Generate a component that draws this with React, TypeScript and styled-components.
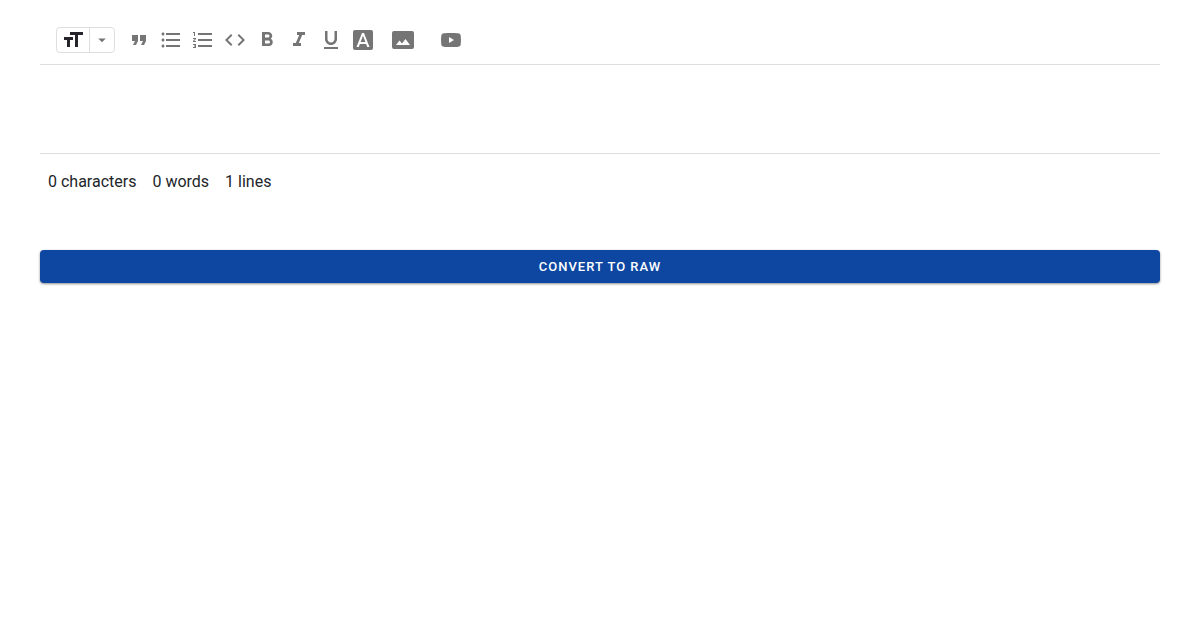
import React, { useState } from "react";
import styled, { createGlobalStyle } from "styled-components";

const GlobalStyle = createGlobalStyle`
  *, *::before, *::after { box-sizing: border-box; }
  body {
    margin: 0;
    background: #fff;
    color: #212529;
    font-family: Roboto, "Liberation Sans", sans-serif;
    font-size: 16px;
    line-height: 24px;
  }
  button, textarea { font-family: inherit; }
`;

const Page = styled.main`
  padding: 24px 40px;
`;

const Toolbar = styled.div`
  display: flex;
  align-items: center;
  gap: 8px;
  padding: 0 16px 8px;
  border-bottom: 1px solid #dedede;
`;

const SplitButton = styled.div`
  display: flex;
  height: 26px;
  border: 1px solid #dedede;
  border-radius: 4px;
`;

const SplitPart = styled.button<{ $caret?: boolean }>`
  display: flex;
  align-items: center;
  justify-content: center;
  width: ${(p) => (p.$caret ? 25 : 32)}px;
  padding: 0;
  border: 0;
  border-left: ${(p) => (p.$caret ? "1px solid #dedede" : "0")};
  background: transparent;
  color: ${(p) => (p.$caret ? "#757575" : "#26232b")};
  cursor: pointer;
`;

const Tools = styled.div`
  display: flex;
`;

const MediaTools = styled.div`
  display: flex;
  gap: 16px;
`;

const ToolButton = styled.button`
  display: flex;
  align-items: center;
  justify-content: center;
  width: 32px;
  height: 32px;
  padding: 0;
  border: 0;
  border-radius: 4px;
  background: transparent;
  color: #757575;
  cursor: pointer;
`;

const Icon = styled.svg<{ $size?: number }>`
  display: block;
  flex: none;
  width: ${(p) => p.$size ?? 24}px;
  height: ${(p) => p.$size ?? 24}px;
  fill: currentColor;
`;

const Editor = styled.textarea`
  display: block;
  width: 100%;
  height: 89px;
  padding: 16px;
  border: 0;
  border-bottom: 1px solid #dedede;
  outline: 0;
  resize: none;
  background: transparent;
  color: inherit;
  font-size: 16px;
  line-height: 24px;
`;

const Stats = styled.div`
  display: flex;
  gap: 16px;
  padding: 16px 8px;
`;

const ConvertButton = styled.button`
  display: block;
  width: 100%;
  height: 33px;
  margin-top: 40px;
  padding: 0 16px;
  border: 0;
  border-radius: 4px;
  background: #0d47a1;
  box-shadow: 0 1px 3px rgba(0, 0, 0, 0.24), 0 1px 2px rgba(0, 0, 0, 0.24);
  color: #fff;
  font-size: 13px;
  font-weight: 500;
  letter-spacing: 1px;
  text-transform: uppercase;
  cursor: pointer;
`;

const textTools = [
  { label: "Quote", d: "M6 17h3l2-4V7H5v6h3zm8 0h3l2-4V7h-6v6h3z" },
  {
    label: "Bulleted list",
    d: "M4 10.5c-.83 0-1.5.67-1.5 1.5s.67 1.5 1.5 1.5 1.5-.67 1.5-1.5-.67-1.5-1.5-1.5zm0-6c-.83 0-1.5.67-1.5 1.5S3.17 7.5 4 7.5 5.5 6.83 5.5 6 4.83 4.5 4 4.5zm0 12c-.83 0-1.5.68-1.5 1.5s.68 1.5 1.5 1.5 1.5-.68 1.5-1.5-.67-1.5-1.5-1.5zM7 19h14v-2H7v2zm0-6h14v-2H7v2zm0-8v2h14V5H7z",
  },
  {
    label: "Numbered list",
    d: "M2 17h2v.5H3v1h1v.5H2v1h3v-4H2v1zm1-9h1V4H2v1h1v3zm-1 3h1.8L2 13.1v.9h3v-1H3.2L5 10.9V10H2v1zm5-6v2h14V5H7zm0 14h14v-2H7v2zm0-6h14v-2H7v2z",
  },
  {
    label: "Code",
    d: "M9.4 16.6L4.8 12l4.6-4.6L8 6l-6 6 6 6 1.4-1.4zm5.2 0l4.6-4.6-4.6-4.6L16 6l6 6-6 6-1.4-1.4z",
  },
  {
    label: "Bold",
    d: "M15.6 10.79c.97-.67 1.65-1.77 1.65-2.79 0-2.26-1.75-4-4-4H7v14h7.04c2.09 0 3.71-1.7 3.71-3.79 0-1.52-.86-2.82-2.15-3.42zM10 6.5h3c.83 0 1.5.67 1.5 1.5s-.67 1.5-1.5 1.5h-3v-3zm3.5 9H10v-3h3.5c.83 0 1.5.67 1.5 1.5s-.67 1.5-1.5 1.5z",
  },
  { label: "Italic", d: "M10 4v3h2.21l-3.42 8H6v3h8v-3h-2.21l3.42-8H18V4z" },
  {
    label: "Underline",
    d: "M12 17c3.31 0 6-2.69 6-6V3h-2.5v8c0 1.93-1.57 3.5-3.5 3.5S8.500 12.930 8.500 11V3H6v8c0 3.310 2.690 6 6 6zm-7 2v2h14v-2H5z",
  },
  {
    label: "Highlight",
    d: "M4 2h16a2 2 0 0 1 2 2v16a2 2 0 0 1-2 2H4a2 2 0 0 1-2-2V4a2 2 0 0 1 2-2zm7 3L5.500 19h2.250l1.120-3h6.250l1.120 3h2.250L13 5h-2zm-1.380 9L12 7.670 14.380 14H9.620z",
  },
];

const mediaTools = [
  {
    label: "Image",
    d: "M3 3h18a2 2 0 0 1 2 2v14a2 2 0 0 1-2 2H3a2 2 0 0 1-2-2V5a2 2 0 0 1 2-2zM8.500 12.500L5 17h14l-4.500-6-3.500 4.510z",
  },
  {
    label: "Video",
    d: "M12 5c3 0 5.500.1 7.200.3 1.400.2 2.300 1 2.500 2.300.4 2.900.4 5.900 0 8.800-.2 1.300-1.100 2.100-2.500 2.300-3.600.4-10.800.4-14.400 0-1.400-.2-2.300-1-2.500-2.300-.4-2.900-.4-5.900 0-8.800.2-1.300 1.100-2.100 2.500-2.300C6.500 5.100 9 5 12 5zM10 9v6l5-3z",
  },
];

export default function App() {
  const [text, setText] = useState("");
  const words = text.split(/\s+/).filter(Boolean).length;
  const lines = text.split("\n").length;

  return (
    <>
      <GlobalStyle />
      <Page>
        <Toolbar role="toolbar" aria-label="Formatting">
          <SplitButton>
            <SplitPart type="button" aria-label="Text size">
              <Icon viewBox="0 0 24 24">
                <path d="M9 4v3h5v12h3V7h5V4H9zm-6 8h3v7h3v-7h3V9H3v3z" />
              </Icon>
            </SplitPart>
            <SplitPart type="button" $caret aria-label="More text sizes">
              <Icon viewBox="0 0 24 24" $size={18}>
                <path d="M7 10l5 5 5-5z" />
              </Icon>
            </SplitPart>
          </SplitButton>
          <Tools>
            {textTools.map((tool) => (
              <ToolButton key={tool.label} type="button" aria-label={tool.label}>
                <Icon viewBox="0 0 24 24">
                  <path fillRule="evenodd" d={tool.d} />
                </Icon>
              </ToolButton>
            ))}
          </Tools>
          <MediaTools>
            {mediaTools.map((tool) => (
              <ToolButton key={tool.label} type="button" aria-label={tool.label}>
                <Icon viewBox="0 0 24 24">
                  <path fillRule="evenodd" d={tool.d} />
                </Icon>
              </ToolButton>
            ))}
          </MediaTools>
        </Toolbar>
        <Editor
          aria-label="Editor content"
          value={text}
          onChange={(e) => setText(e.target.value)}
        />
        <Stats>
          <span>{`${text.length} characters`}</span>
          <span>{`${words} words`}</span>
          <span>{`${lines} lines`}</span>
        </Stats>
        <ConvertButton type="button">Convert to raw</ConvertButton>
      </Page>
    </>
  );
}
